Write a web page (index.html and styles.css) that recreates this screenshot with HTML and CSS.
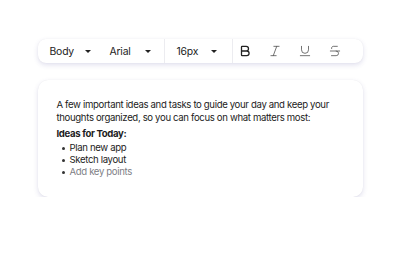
FILE: index.html
```html
<!DOCTYPE html>
<html lang="en">
<head>
  <meta charset="UTF-8">
  <title>Editor</title>
  <link rel="stylesheet" href="styles.css">
</head>
<body>
  <div class="editor">
    <div class="toolbar">
      <div class="select select-style">Body <span class="caret"></span></div>
      <div class="select select-font">Arial <span class="caret"></span></div>
      <span class="divider"></span>
      <div class="select select-size">16px <span class="caret"></span></div>
      <span class="divider"></span>
      <button class="tool" title="Bold">
        <svg viewBox="0 0 24 24"><path d="M6 12h9a4 4 0 0 1 0 8H7a1 1 0 0 1-1-1V5a1 1 0 0 1 1-1h7a4 4 0 0 1 0 8"/></svg>
      </button>
      <button class="tool thin" title="Italic">
        <svg viewBox="0 0 24 24"><line x1="19" x2="10" y1="4" y2="4"/><line x1="14" x2="5" y1="20" y2="20"/><line x1="15" x2="9" y1="4" y2="20"/></svg>
      </button>
      <button class="tool thin" title="Underline">
        <svg viewBox="0 0 24 24"><path d="M6 4v6a6 6 0 0 0 12 0V4"/><line x1="4" x2="20" y1="20" y2="20"/></svg>
      </button>
      <button class="tool thin" title="Strikethrough">
        <svg viewBox="0 0 24 24"><path d="M16 4H9a3 3 0 0 0-2.83 4"/><path d="M14 12a4 4 0 0 1 0 8H6"/><line x1="4" x2="20" y1="12" y2="12"/></svg>
      </button>
    </div>

    <div class="card">
      <p>A few important ideas and tasks to guide your day and keep your thoughts organized, so you can focus on what matters most:</p>
      <h3>Ideas for Today:</h3>
      <ul>
        <li>Plan new app</li>
        <li>Sketch layout</li>
        <li class="muted">Add key points</li>
      </ul>
    </div>
  </div>
</body>
</html>
```

FILE: styles.css
```css
body {
  margin: 0;
  background: #fff;
  font-family: Inter, 'Noto Sans', sans-serif;
  color: #1c1c22;
}

.editor {
  width: 325px;
  margin: 39px auto 0;
}

.toolbar {
  display: flex;
  align-items: center;
  height: 24px;
  padding: 0 12px;
  background: #fff;
  border-radius: 8px;
  box-shadow: 0 2px 5px rgba(70, 60, 150, 0.16), 0 0 1px rgba(0, 0, 0, 0.08);
  font-size: 10.4px;
  letter-spacing: -0.2px;
}

.select {
  display: flex;
  align-items: center;
  justify-content: space-between;
  width: 41px;
  color: #222;
}

.select-style {
  margin-right: 19px;
}

.select-font {
  width: 41px;
  margin-right: 13px;
}

.select-size {
  width: 40px;
  margin: 0 15px 0 12px;
}

.caret {
  width: 0;
  height: 0;
  border-left: 3px solid transparent;
  border-right: 3px solid transparent;
  border-top: 3px solid #222;
}

.divider {
  width: 1px;
  height: 24px;
  background: #ececf0;
}

.tool {
  display: flex;
  align-items: center;
  justify-content: center;
  width: 30px;
  height: 24px;
  padding: 0;
  border: none;
  background: none;
}

.tool:first-of-type {
  margin-left: -3px;
}

.tool svg {
  width: 14px;
  height: 14px;
  fill: none;
  stroke: #222;
  stroke-width: 2.2;
  stroke-linecap: round;
  stroke-linejoin: round;
}

.tool.thin svg {
  stroke: #555;
  stroke-width: 1.4;
}

.card {
  margin-top: 17px;
  padding: 18px 14px 19px 19px;
  background: #fff;
  border-radius: 10px;
  box-shadow: 0 2px 5px rgba(70, 60, 150, 0.16), 0 0 1px rgba(0, 0, 0, 0.08);
  font-size: 9.6px;
  letter-spacing: -0.35px;
  line-height: 13px;
}

.card p {
  margin: 0 0 3px;
}

.card h3 {
  margin: 0 0 2px;
  font-size: 9.6px;
  font-weight: 700;
}

.card ul {
  margin: 0;
  padding-left: 13px;
  list-style: none;
}

.card li {
  position: relative;
  line-height: 12px;
}

.card li::before {
  content: "";
  position: absolute;
  left: -8px;
  top: 5px;
  width: 3px;
  height: 3px;
  border-radius: 50%;
  background: #333;
}

.card li.muted {
  color: #808086;
}
```
